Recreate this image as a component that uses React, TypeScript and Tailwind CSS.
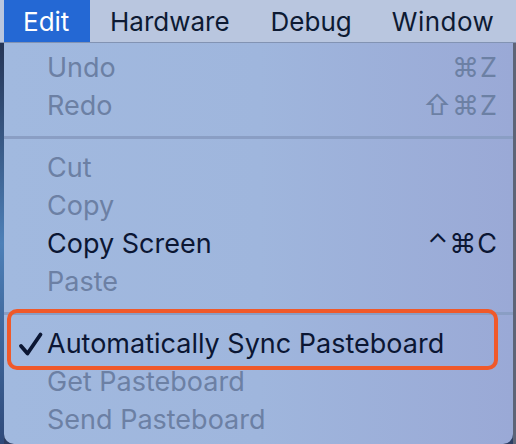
import React from "react";

const font = { fontFamily: "Inter, 'DejaVu Sans', sans-serif" };

type Item = { label: string; shortcut?: string; enabled?: boolean; checked?: boolean };

function Row({ item }: { item: Item }) {
  return (
    <div
      className={`relative flex h-[38px] items-center pl-[43px] pr-[15px] text-[27px] leading-[38px] ${
        item.enabled ? "text-[#0b1633]" : "text-[#6c80a4]"
      }`}
    >
      {item.checked && (
        <svg className="absolute left-[12px] top-[6px]" width="28" height="26" viewBox="0 0 28 26">
          <path d="M5 15 L11.5 22.5 L24.5 3.5" fill="none" stroke="#0b1633" strokeWidth="3.8" strokeLinecap="round" strokeLinejoin="round" />
        </svg>
      )}
      <span className="flex-1 whitespace-nowrap">{item.label}</span>
      {item.shortcut && (
        <span className="whitespace-nowrap tracking-[1px]">{item.shortcut}</span>
      )}
    </div>
  );
}

function Sep() {
  return (
    <div className="flex h-[24px] items-center">
      <div className="h-[3px] w-full bg-[#8a9ec4]" />
    </div>
  );
}

export default function App() {
  return (
    <div className="relative h-[444px] w-[516px] overflow-hidden bg-[#2d3e63]" style={font}>
      <div className="flex h-[43px] items-stretch border-b border-[#8293b3] bg-[#b9c6df] pl-[4px] text-[26px] text-[#0d1a33]">
        <div className="flex w-[86px] items-center bg-[#2468d4] pl-[19px] text-white">Edit</div>
        <div className="flex items-center pl-[20px]">Hardware</div>
        <div className="flex items-center pl-[41px]">Debug</div>
        <div className="flex items-center pl-[40px] tracking-[0.5px]">Window</div>
      </div>
      <div className="flex h-[401px]">
        <div className="w-[4px] bg-gradient-to-b from-[#253556] via-[#4d80b8] to-[#2f4a7a]" />
        <div className="flex-1 rounded-b-[10px] bg-gradient-to-r from-[#a1b9df] via-[#9fb6dd] to-[#9aa9d6] pt-[6px]">
          <Row item={{ label: "Undo", shortcut: "⌘Z" }} />
          <Row item={{ label: "Redo", shortcut: "⇧⌘Z" }} />
          <Sep />
          <Row item={{ label: "Cut" }} />
          <Row item={{ label: "Copy" }} />
          <Row item={{ label: "Copy Screen", shortcut: "⌃⌘C", enabled: true }} />
          <Row item={{ label: "Paste" }} />
          <Sep />
          <Row item={{ label: "Automatically Sync Pasteboard", enabled: true, checked: true }} />
          <Row item={{ label: "Get Pasteboard" }} />
          <Row item={{ label: "Send Pasteboard" }} />
        </div>
        <div className="w-[3px] bg-[#5d6477]" />
      </div>
      <div className="absolute left-[7px] top-[309px] h-[61px] w-[491px] rounded-[10px] border-[4px] border-[#f0592a]" />
    </div>
  );
}
